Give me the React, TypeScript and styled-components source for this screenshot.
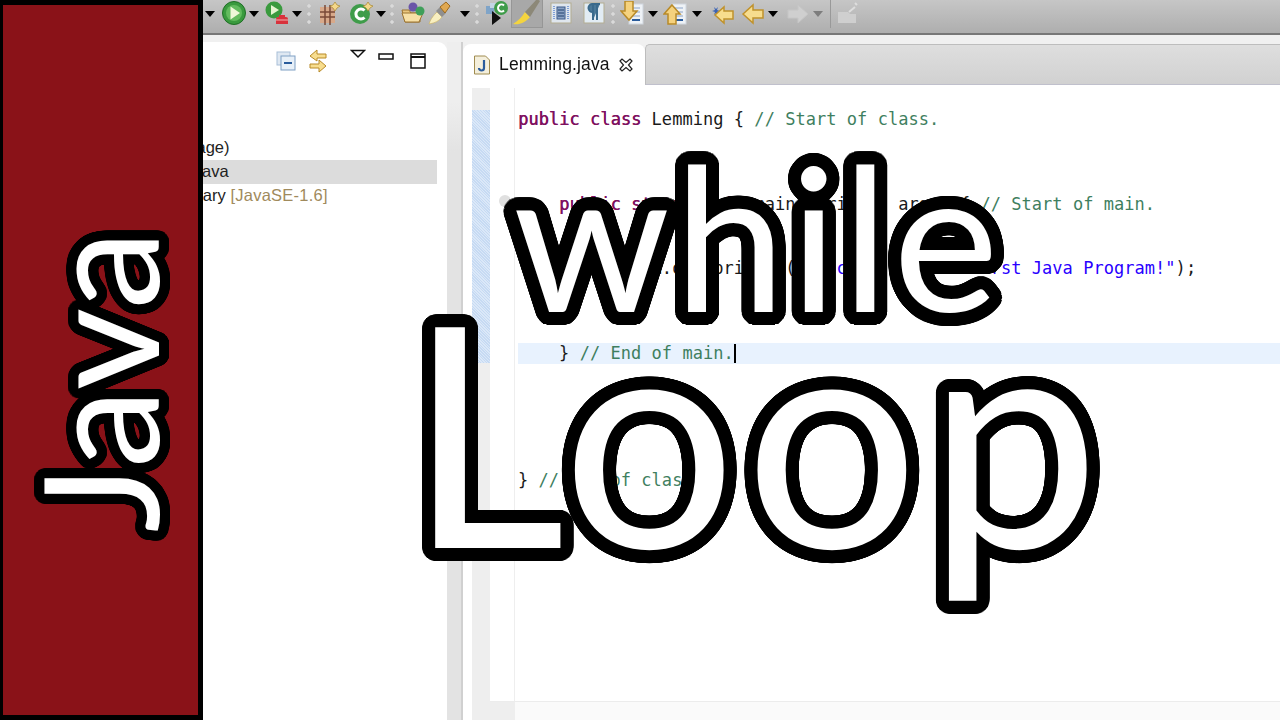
import React from "react";
import styled, { createGlobalStyle } from "styled-components";

// outline that keeps round outer corners, -webkit-text-stroke gives spikes on the w
const ring = (r: number) => {
  const parts: string[] = [];
  for (let i = 0; i < 64; i++) {
    const a = (i / 64) * Math.PI * 2;
    parts.push(`${(Math.cos(a) * r).toFixed(1)}px ${(Math.sin(a) * r).toFixed(1)}px 0 #000`);
  }
  return parts.join(",");
};

const GlobalStyle = createGlobalStyle`
  html, body { margin: 0; padding: 0; background: #fff; }
  #root { width: 1280px; height: 720px; overflow: hidden; }
`;

const Page = styled.div`
  position: relative;
  display: flex;
  width: 1280px;
  height: 720px;
  overflow: hidden;
  background: #f0f0f0;
`;

const Sidebar = styled.aside`
  box-sizing: border-box;
  flex: 0 0 203px;
  height: 720px;
  display: flex;
  align-items: center;
  justify-content: center;
  padding: 42px 7px 0 0;
  background: #8a1218;
  border-style: solid;
  border-color: #000;
  border-width: 5px 5px 5px 3px;
  z-index: 1;
`;

const SideTitle = styled.div`
  writing-mode: vertical-rl;
  transform: rotate(180deg);
  font-family: "Lato", sans-serif;
  font-size: 160px;
  line-height: 1;
  color: #fff;
  text-shadow: ${ring(10)};
`;

const Shot = styled.main`
  flex: 1;
  min-width: 0;
  display: flex;
  flex-direction: column;
  filter: blur(0.5px);
`;

const Toolbar = styled.div`
  flex: 0 0 33px;
  display: flex;
  align-items: center;
  background: linear-gradient(#c6c6c6, #aeaeae);
  border-bottom: 2px solid #777;
`;

const ToolIcon = styled.svg<{ $ml: number }>`
  flex: 0 0 auto;
  width: 24px;
  height: 24px;
  margin-left: ${(p) => p.$ml}px;
  margin-top: -7px;
`;

const ToolArrow = styled.span<{ $ml: number; $off?: boolean }>`
  flex: 0 0 10px;
  height: 6px;
  margin-left: ${(p) => p.$ml}px;
  margin-top: -5px;
  background: ${(p) => (p.$off ? "#7d7d7d" : "#000")};
  clip-path: polygon(0 0, 100% 0, 50% 100%);
`;

const ToolSep = styled.span<{ $ml: number }>`
  flex: 0 0 4px;
  height: 24px;
  margin-left: ${(p) => p.$ml}px;
  margin-top: -6px;
  background: radial-gradient(circle, #dadada 1.4px, transparent 2px) center top / 4px 8px repeat-y;
`;

const ToolRule = styled.span<{ $ml: number }>`
  flex: 0 0 1px;
  height: 28px;
  margin-left: ${(p) => p.$ml}px;
  margin-top: -6px;
  background: #999;
`;

const ActiveTool = styled.span<{ $ml: number }>`
  flex: 0 0 32px;
  box-sizing: border-box;
  height: 29px;
  margin-left: ${(p) => p.$ml}px;
  margin-top: -6px;
  display: flex;
  align-items: center;
  justify-content: center;
  background: #a8a8a8;
  border: 1px solid #969696;
  border-top: 0;
`;

const Workspace = styled.div`
  flex: 1;
  min-height: 0;
  display: flex;
  padding-top: 7px;
`;

const Explorer = styled.section`
  flex: 0 0 244px;
  display: flex;
  flex-direction: column;
  background: #fff;
  border-top-right-radius: 9px;
  overflow: hidden;
`;

const ViewActions = styled.div`
  flex: 0 0 auto;
  height: 38px;
  display: flex;
  align-items: center;
  padding-bottom: 2px;
`;

const ViewIcon = styled.svg<{ $ml: number; $up?: number }>`
  flex: 0 0 auto;
  margin-left: ${(p) => p.$ml}px;
  margin-top: ${(p) => -(p.$up ?? 0)}px;
`;

const Tree = styled.ul`
  list-style: none;
  margin: 54px 0 0;
  padding: 0 10px 0 0;
  font-family: "Liberation Sans", sans-serif;
  font-size: 16.500px;
  color: #222;
`;

const TreeRow = styled.li<{ $selected?: boolean }>`
  height: 24px;
  line-height: 23px;
  overflow: hidden;
  white-space: nowrap;
  background: ${(p) => (p.$selected ? "#dcdcdc" : "transparent")};
`;

const TreeLabel = styled.span<{ $shift: number }>`
  display: block;
  margin-left: ${(p) => p.$shift}px;
`;

const Decoration = styled.span`
  color: #a08a5c;
  letter-spacing: 0.25px;
`;

const Sash = styled.div`
  flex: 0 0 16px;
  box-sizing: border-box;
  background: linear-gradient(#eeeeee 0 60px, #e3e3e3 110px);
  border-right: 2px solid #d0d0d0;
`;

const Editor = styled.section`
  flex: 1;
  min-width: 0;
  display: flex;
  flex-direction: column;
  padding-top: 2px;
`;

const TabStrip = styled.div`
  flex: 0 0 41px;
  display: flex;
`;

const Tab = styled.div`
  flex: 0 0 182px;
  box-sizing: border-box;
  display: flex;
  align-items: center;
  padding: 0 10px;
  gap: 8px;
  background: #fff;
  border-radius: 8px 8px 0 0;
  font-family: "Liberation Sans", sans-serif;
  font-size: 17.500px;
  letter-spacing: 0.15px;
  color: #111;
`;

const TabFill = styled.div`
  flex: 1;
  background: linear-gradient(#dedede, #d1d1d1);
  border-top: 1px solid #bdbdbd;
  border-bottom: 1px solid #c0c0cc;
  border-left: 1px solid #bdbdbd;
  border-top-left-radius: 5px;
`;

const EditorBody = styled.div`
  flex: 1;
  min-height: 0;
  display: flex;
  background: #fff;
  padding-top: 3px;
`;

const LeftEdge = styled.div`
  flex: 0 0 9px;
`;

const Ruler = styled.div`
  flex: 0 0 18px;
  display: flex;
  flex-direction: column;
  background: #eee;
  padding-top: 22px;
`;

const RulerRange = styled.div`
  height: 253px;
  background: repeating-linear-gradient(45deg, #c6daf3 0 1px, #dbe8f8 1px 2px);
`;

const CodeArea = styled.div`
  flex: 1;
  min-width: 0;
  display: flex;
  flex-direction: column;
`;

const CodeScroll = styled.div`
  flex: 0 0 613px;
  display: flex;
  border-bottom: 1px solid #ececec;
`;

const FoldGutter = styled.div`
  flex: 0 0 25px;
  box-sizing: border-box;
  padding: 107px 0 0 9px;
  border-right: 1px solid #eee;
`;

const FoldMark = styled.div`
  width: 12px;
  height: 12px;
  border-radius: 50%;
  background: #e0e0e0;
`;

const Code = styled.pre`
  flex: 1;
  margin: 0;
  padding: 21px 0 0 3px;
  font-family: "DejaVu Sans Mono", monospace;
  font-size: 17px;
  letter-spacing: 0.04px;
  line-height: 21.24px;
  color: #1a1a1a;
`;

const Line = styled.div<{ $current?: boolean }>`
  height: 21.24px;
  background: ${(p) => (p.$current ? "#e8f2fe" : "transparent")};
`;

const Kw = styled.span`
  color: #7f1060;
  text-shadow: 0.4px 0 0 #7f1060;
`;

const Note = styled.span`
  color: #3f7f5f;
`;

const Str = styled.span`
  color: #2a00ff;
`;

const Caret = styled.span`
  display: inline-block;
  width: 2px;
  height: 19px;
  background: #000;
  vertical-align: -4px;
`;

const StatusStrip = styled.div`
  flex: 1;
  background: linear-gradient(90deg, #eee 0 25px, #fafafa 25px);
`;

const Overlay = styled.div`
  position: absolute;
  left: 0;
  top: 0;
  width: 1280px;
  height: 720px;
  z-index: 2;
  pointer-events: none;
  font-family: "Lato", sans-serif;
  color: #fff;
`;

const Word = styled.div<{ $size: number; $left: number; $top: number; $spread?: number }>`
  position: absolute;
  left: ${(p) => p.$left}px;
  top: ${(p) => p.$top}px;
  font-size: ${(p) => p.$size}px;
  letter-spacing: ${(p) => p.$spread ?? 0}px;
  line-height: 1;
  white-space: nowrap;
  text-shadow: ${ring(13)};
`;

const Play = ({ ml }: { ml: number }) => (
  <ToolIcon $ml={ml} viewBox="0 0 24 24">
    <circle cx="12" cy="12" r="11.500" fill="#3a9a3e" stroke="#1f6e25" />
    <circle cx="12" cy="12" r="8" fill="#63bb5e" />
    <path d="M8.500 5.500 18 12l-9.500 6.500z" fill="#eef7d8" />
  </ToolIcon>
);

const RunExternal = ({ ml }: { ml: number }) => (
  <ToolIcon $ml={ml} viewBox="0 0 24 24">
    <circle cx="9" cy="9" r="8.500" fill="#3a9a3e" />
    <path d="M6 4l8 5-8 5z" fill="#e6f4d0" />
    <path d="M11 18a2 2 0 0 1 2-2h1v-2h6v2h1a2 2 0 0 1 2 2v5H11z" fill="#d8323c" />
    <path d="M11 19h12" stroke="#f2b0b0" />
  </ToolIcon>
);

const NewGrid = ({ ml }: { ml: number }) => (
  <ToolIcon $ml={ml} viewBox="0 0 24 24">
    <rect x="3" y="6" width="15" height="16" fill="#d8a98a" />
    <path d="M3 11h15M3 16h15M8 4v20M13 4v20" stroke="#7a4a38" strokeWidth="1.500" />
    <path d="M18 1l2 3 3 1-3 2-2 3-2-3-3-2 3-1z" fill="#f4d88a" stroke="#a07c20" strokeWidth=".6" />
  </ToolIcon>
);

const NewClass = ({ ml }: { ml: number }) => (
  <ToolIcon $ml={ml} viewBox="0 0 24 24">
    <circle cx="10" cy="13" r="10" fill="#3f9c4a" />
    <path d="M14.500 9.500a5 5 0 1 0 0 7" fill="none" stroke="#fff" strokeWidth="3" />
    <path d="M18 1l2 3 3 1-3 2-2 3-2-3-3-2 3-1z" fill="#f4d88a" stroke="#a07c20" strokeWidth=".6" />
  </ToolIcon>
);

const OpenFolder = ({ ml }: { ml: number }) => (
  <ToolIcon $ml={ml} viewBox="0 0 24 24">
    <path d="M1 9h7l2 3h9v9H4z" fill="#eac77e" stroke="#9c7430" />
    <path d="M1 12h21l-4 9H4z" fill="#f7e0a6" stroke="#9c7430" />
    <circle cx="12" cy="6" r="4.500" fill="#6a55a8" />
    <circle cx="19" cy="10" r="4.500" fill="#3f9f5a" />
  </ToolIcon>
);

const Brush = ({ ml }: { ml: number }) => (
  <ToolIcon $ml={ml} viewBox="0 0 24 24">
    <path d="M1 23c2-6 5-9 8-12l5 5c-3 4-7 6-13 7z" fill="#f8efc0" stroke="#c9b060" strokeWidth=".6" />
    <path d="M8 10l4-4 6 6-4 4z" fill="#8f8f8f" />
    <path d="M12 6l6-5 4 4-5 7z" fill="#e0a850" stroke="#9c6a20" />
  </ToolIcon>
);

const TypeHierarchy = ({ ml }: { ml: number }) => (
  <ToolIcon $ml={ml} viewBox="0 0 24 24">
    <rect x="1" y="5" width="8" height="8" fill="#7fa4c8" />
    <path d="M5 2h6v5H5z" fill="#c4d4e4" />
    <circle cx="16" cy="7" r="7" fill="#3f9c4a" />
    <path d="M19 4.500a3.500 3.500 0 1 0 0 5" fill="none" stroke="#fff" strokeWidth="2" />
    <path d="M7 10v14l9-7z" fill="#111" />
  </ToolIcon>
);

const Marker = () => (
  <svg width="30" height="28" viewBox="0 0 30 28">
    <path d="M1 25c6 1 12-1 17-7l-5-5c-3 5-7 9-12 12z" fill="#f4d43e" />
    <path d="M13 13l5 5 10-16-3-2z" fill="#8c8878" />
  </svg>
);

const BlockSelect = ({ ml }: { ml: number }) => (
  <ToolIcon $ml={ml} viewBox="0 0 24 24">
    <rect x="2" y="2" width="20" height="20" fill="#dfe6ee" stroke="#b3ad92" />
    <path d="M5 5v14M19 5v14" stroke="#7fa0d8" strokeDasharray="1 1" strokeWidth="2" />
    <rect x="8" y="6" width="8" height="12" fill="#8aa2c4" stroke="#3c5a88" />
    <path d="M9 9h6M9 12h6M9 15h6" stroke="#20406c" />
  </ToolIcon>
);

const Pilcrow = ({ ml }: { ml: number }) => (
  <ToolIcon $ml={ml} viewBox="0 0 24 24">
    <rect x="2" y="2" width="20" height="20" fill="#e2ecf4" stroke="#b3ad92" />
    <path d="M11 19v-8a4 4 0 0 1-1-8h8M11 4v15M15 4v15" fill="#4a7898" stroke="#3a6a8c" strokeWidth="2" />
  </ToolIcon>
);

const NextAnnotation = ({ ml, up }: { ml: number; up?: boolean }) => (
  <ToolIcon $ml={ml} viewBox="0 0 24 24">
    <rect x="9" y="3" width="14" height="20" fill="#eef2f6" stroke="#cfd6de" />
    <path d="M12 7h8M12 11h8M12 15h8" stroke="#8ca4c8" />
    <path d="M12 19h8" stroke="#2a5c9c" strokeWidth="2" />
    {up ? (
      <path d="M9 4l8 9h-4v10H5V13H1z" fill="#f5d27e" stroke="#b88a28" strokeWidth="1.500" />
    ) : (
      <path d="M5 0h8v10h4l-8 9-8-9h4z" fill="#f5d27e" stroke="#b88a28" strokeWidth="1.500" />
    )}
  </ToolIcon>
);

const BackStar = ({ ml }: { ml: number }) => (
  <ToolIcon $ml={ml} viewBox="0 0 24 24">
    <path d="M4 6l2 2 2-2-1 3 3 1-3 1 1 3-2-2-2 2 1-3-3-1 3-1z" fill="#3c64b4" />
    <path d="M5 14l9-8v4h9v8h-9v4z" fill="#f7dd8e" stroke="#c0922c" strokeWidth="1.500" />
  </ToolIcon>
);

const NavArrow = ({ ml, right }: { ml: number; right?: boolean }) => (
  <ToolIcon $ml={ml} viewBox="0 0 24 24">
    {right ? (
      <path d="M22 13l-10-9v5H2v8h10v5z" fill="#cfcfcf" stroke="#c6c6c6" />
    ) : (
      <path d="M2 13l10-9v5h10v8H12v5z" fill="#f7dd8e" stroke="#c0922c" strokeWidth="1.500" />
    )}
  </ToolIcon>
);

const Pin = ({ ml }: { ml: number }) => (
  <ToolIcon $ml={ml} viewBox="0 0 24 24">
    <path d="M2 11h10l2 2h6v9H2z" fill="#cfcfcf" />
    <path d="M13 11l6-5M19 2l2 2" stroke="#dedede" strokeWidth="2" />
  </ToolIcon>
);

export default function App() {
  return (
    <Page>
      <GlobalStyle />

      <Sidebar>
        <SideTitle>Java</SideTitle>
      </Sidebar>

      <Shot>
        <Toolbar>
          <ToolArrow $ml={2} />
          <Play ml={7} />
          <ToolArrow $ml={3} />
          <RunExternal ml={6} />
          <ToolArrow $ml={3} />
          <ToolSep $ml={5} />
          <NewGrid ml={6} />
          <NewClass ml={9} />
          <ToolArrow $ml={2} />
          <ToolSep $ml={4} />
          <OpenFolder ml={7} />
          <Brush ml={3} />
          <ToolArrow $ml={8} />
          <ToolSep $ml={5} />
          <TypeHierarchy ml={6} />
          <ActiveTool $ml={2}>
            <Marker />
          </ActiveTool>
          <BlockSelect ml={6} />
          <Pilcrow ml={9} />
          <ToolSep $ml={5} />
          <NextAnnotation ml={5} />
          <ToolArrow $ml={4} />
          <NextAnnotation ml={5} up />
          <ToolArrow $ml={5} />
          <BackStar ml={8} />
          <NavArrow ml={7} />
          <ToolArrow $ml={3} />
          <NavArrow ml={8} right />
          <ToolArrow $ml={3} $off />
          <ToolRule $ml={7} />
          <Pin ml={5} />
        </Toolbar>

        <Workspace>
          <Explorer>
            <ViewActions>
              <ViewIcon $ml={73} width="20" height="20" viewBox="0 0 20 20">
                <rect x="1" y="1" width="13" height="13" fill="#dfe8f2" stroke="#a9bfd8" />
                <rect x="5" y="5" width="14" height="14" fill="#e8f0f8" stroke="#7f9fc4" />
                <path d="M8 12h8" stroke="#2a5c9c" strokeWidth="2" />
              </ViewIcon>
              <ViewIcon $ml={10} width="24" height="24" viewBox="0 0 24 24">
                <path d="M11 1 4 7l7 5V9h9V5h-9z" fill="#f7dd8e" stroke="#b88a28" />
                <path d="M13 11l7 6-7 6v-4H4v-4h9z" fill="#f7dd8e" stroke="#b88a28" />
              </ViewIcon>
              <ViewIcon $ml={20} $up={4} width="16" height="20" viewBox="0 0 16 20">
                <path d="M1.500 1.500h13L8 8z" fill="#fff" stroke="#111" strokeWidth="1.500" />
              </ViewIcon>
              <ViewIcon $ml={12} width="16" height="20" viewBox="0 0 16 20">
                <rect x="1" y="3" width="14" height="5" fill="#fff" stroke="#111" strokeWidth="1.500" />
              </ViewIcon>
              <ViewIcon $ml={16} width="16" height="16" viewBox="0 0 16 16">
                <rect x="1" y="1" width="14" height="14" fill="#fff" stroke="#111" strokeWidth="1.500" />
                <path d="M1 4h14" stroke="#111" strokeWidth="2" />
              </ViewIcon>
            </ViewActions>
            <Tree>
              <TreeRow>
                <TreeLabel $shift={-101}>(default package)</TreeLabel>
              </TreeRow>
              <TreeRow $selected>
                <TreeLabel $shift={-77}>Lemming.java</TreeLabel>
              </TreeRow>
              <TreeRow>
                <TreeLabel $shift={-123}>
                  JRE System Library <Decoration>[JavaSE-1.6]</Decoration>
                </TreeLabel>
              </TreeRow>
            </Tree>
          </Explorer>

          <Sash />

          <Editor>
            <TabStrip>
              <Tab>
                <svg width="18" height="20" viewBox="0 0 18 20" style={{ flexShrink: 0 }}>
                  <path d="M1.500 1h11l4 4v14h-15z" fill="#f4efdc" stroke="#a08c50" />
                  <path d="M11 5v8a2.500 2.500 0 0 1-5 0" fill="none" stroke="#2a5c9c" strokeWidth="2.200" />
                </svg>
                Lemming.java
                <svg width="16" height="16" viewBox="0 0 16 16" style={{ flexShrink: 0 }}>
                  <path
                    d="M2 4l2-2 4 3.500L12 2l2 2-3.500 4 3.500 4-2 2-4-3.500L4 14l-2-2 3.500-4z"
                    fill="#fff"
                    stroke="#222"
                    strokeWidth="1.200"
                  />
                </svg>
              </Tab>
              <TabFill />
            </TabStrip>
            <EditorBody>
              <LeftEdge />
              <Ruler>
                <RulerRange />
              </Ruler>
              <CodeArea>
                <CodeScroll>
                  <FoldGutter>
                    <FoldMark />
                  </FoldGutter>
                  <Code>
                    <Line>
                      <Kw>public</Kw> <Kw>class</Kw> Lemming {"{"} <Note>// Start of class.</Note>
                    </Line>
                    <Line />
                    <Line />
                    <Line />
                    <Line>
                      {"    "}
                      <Kw>public</Kw> <Kw>static</Kw> <Kw>void</Kw> main(String[] args) {"{"}{" "}
                      <Note>// Start of main.</Note>
                    </Line>
                    <Line />
                    <Line />
                    <Line>
                      {"        "}System.out.println(<Str>"Welcome to your first Java Program!"</Str>);
                    </Line>
                    <Line />
                    <Line />
                    <Line />
                    <Line $current>
                      {"    "}
                      {"} "}
                      <Note>// End of main.</Note>
                      <Caret />
                    </Line>
                    <Line />
                    <Line />
                    <Line />
                    <Line />
                    <Line />
                    <Line>
                      {"} "}
                      <Note>// End of class.</Note>
                    </Line>
                  </Code>
                </CodeScroll>
                <StatusStrip />
              </CodeArea>
            </EditorBody>
          </Editor>
        </Workspace>
      </Shot>

      <Overlay>
        <Word $size={200} $left={513} $top={135} $spread={4}>
          while
        </Word>
        <Word $size={308} $left={407} $top={275} $spread={8}>
          Loop
        </Word>
      </Overlay>
    </Page>
  );
}
